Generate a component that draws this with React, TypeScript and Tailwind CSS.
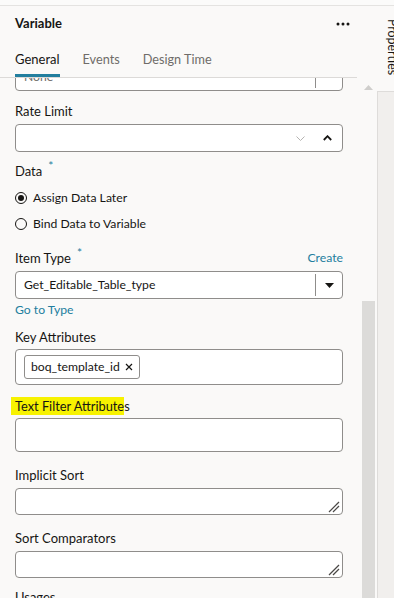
import React from "react";

const F = { fontFamily: "Lato, 'Noto Sans', sans-serif" };

function Label({ children, className = "" }: { children: React.ReactNode; className?: string }) {
  return <div className={"h-[18px] text-[13px] leading-[18px] text-[#161513] " + className}>{children}</div>;
}

function Req() {
  return <span className="inline-block h-0 align-top leading-[12px] relative -top-[2px] ml-[6px] text-[12px] text-[#227e9e]">*</span>;
}

function ResizeHandle() {
  return (
    <svg className="absolute right-[2px] bottom-[1px]" width="12" height="12" viewBox="0 0 12 12">
      <line x1="1" y1="11" x2="11" y2="1" stroke="#4a4846" strokeWidth="1.2" />
      <line x1="5" y1="11" x2="11" y2="5" stroke="#4a4846" strokeWidth="1.2" />
    </svg>
  );
}

export default function App() {
  return (
    <div style={F} className="w-[394px] h-[598px] overflow-hidden bg-[#faf9f8] flex flex-col">
      <div className="h-[5px] bg-[#fbfbfa] border-b border-[#e4e3e1] box-content" />
      <div className="flex flex-1 min-h-0">
        {/* main panel */}
        <div className="w-[377px] flex flex-col min-h-0">
          <div className="w-[357px] h-[36px] flex items-center justify-between pl-[15px] pr-[7px]">
            <span className="text-[13px] font-bold text-[#161513]">Variable</span>
            <svg width="14" height="4" viewBox="0 0 14 4">
              <circle cx="2" cy="2" r="1.5" fill="#161513" />
              <circle cx="7" cy="2" r="1.5" fill="#161513" />
              <circle cx="12" cy="2" r="1.5" fill="#161513" />
            </svg>
          </div>
          <div className="flex flex-1 min-h-0">
            <div className="w-[357px] flex flex-col min-h-0">
              <div className="flex h-[36px] border-b border-[#dcdad8] pl-[15px] gap-[23px] text-[13px]">
                <div className="h-[35px] flex items-center border-b-[3px] border-[#227e9e] pt-[3px] text-[#161513]">General</div>
                <div className="h-[35px] flex items-center text-[12.7px] text-[#6f6c69]">Events</div>
                <div className="h-[35px] flex items-center text-[12.7px] text-[#6f6c69]">Design Time</div>
              </div>
              <div className="flex-1 min-h-0 overflow-hidden pl-[15px]">
                <div className="w-[328px] flex flex-col -mt-[15px]">
                  {/* None select (scrolled) */}
                  <div className="h-[28px] flex bg-white border border-[#8f8d8b] rounded-[4px]">
                    <div className="flex-1 pl-[8px] flex items-center text-[12.2px] text-[#6f6c69]">None</div>
                    <div className="w-px bg-[#8f8d8b] my-[2px]" />
                    <div className="w-[26px]" />
                  </div>

                  <Label className="mt-[11px]">Rate Limit</Label>
                  <div className="mt-[4px] h-[28px] flex items-center justify-end bg-white border border-[#8f8d8b] rounded-[4px] pr-[10px] gap-[18px]">
                    <svg width="9" height="5" viewBox="0 0 9 5">
                      <polyline points="0.5,0.5 4.5,4.5 8.5,0.5" fill="none" stroke="#b5b3b1" strokeWidth="1" />
                    </svg>
                    <svg width="9" height="6" viewBox="0 0 9 6">
                      <polyline points="0.8,5 4.5,1.2 8.2,5" fill="none" stroke="#161513" strokeWidth="1.8" />
                    </svg>
                  </div>

                  <Label className="mt-[10px]">Data<Req /></Label>
                  <div className="mt-[9px] h-[18px] flex items-center gap-[6px] text-[12.2px] text-[#161513]">
                    <span className="w-[12px] h-[12px] rounded-full border-[1.5px] border-[#161513] flex items-center justify-center">
                      <span className="w-[6px] h-[6px] rounded-full bg-[#161513]" />
                    </span>
                    Assign Data Later
                  </div>
                  <div className="mt-[8px] h-[18px] flex items-center gap-[6px] text-[12.2px] text-[#161513]">
                    <span className="w-[12px] h-[12px] rounded-full border-[1.3px] border-[#161513]" />
                    Bind Data to Variable
                  </div>

                  <div className="mt-[16px] h-[18px] flex justify-between items-center">
                    <Label>Item Type<Req /></Label>
                    <span className="text-[12.2px] leading-[18px] text-[#227e9e]">Create</span>
                  </div>
                  <div className="mt-[4px] h-[28px] flex bg-white border border-[#8f8d8b] rounded-[4px]">
                    <div className="flex-1 pl-[8px] flex items-center text-[12.2px] text-[#161513]">Get_Editable_Table_type</div>
                    <div className="w-px bg-[#8f8d8b] my-[2px]" />
                    <div className="w-[26px] flex items-center justify-center">
                      <svg width="9" height="5" viewBox="0 0 9 5">
                        <polygon points="0,0 9,0 4.5,5" fill="#161513" />
                      </svg>
                    </div>
                  </div>
                  <div className="mt-[2px] h-[18px] text-[12.2px] leading-[18px] text-[#227e9e]">Go to Type</div>

                  <Label className="mt-[9px]">Key Attributes</Label>
                  <div className="mt-[3px] h-[36px] flex items-center bg-white border border-[#8f8d8b] rounded-[4px] pl-[8px]">
                    <div className="h-[24px] flex items-center gap-[5px] border border-[#8f8d8b] rounded-[3px] pl-[6px] pr-[6px] text-[12.2px] text-[#161513]">
                      boq_template_id
                      <svg width="8" height="8" viewBox="0 0 8 8">
                        <path d="M1 1 L7 7 M7 1 L1 7" stroke="#161513" strokeWidth="1.2" />
                      </svg>
                    </div>
                  </div>

                  <div className="mt-[12px] h-[18px] text-[12.8px] leading-[18px] text-[#161513]">
                    <span className="bg-[#f7f200] -ml-[4px] pl-[4px] py-[1px]">Text Filter Attribute</span>s
                  </div>
                  <div className="mt-[3px] h-[34px] bg-white border border-[#8f8d8b] rounded-[4px]" />

                  <Label className="mt-[14px]">Implicit Sort</Label>
                  <div className="mt-[4px] h-[27px] relative bg-white border border-[#8f8d8b] rounded-[4px]">
                    <ResizeHandle />
                  </div>

                  <Label className="mt-[14px]">Sort Comparators</Label>
                  <div className="mt-[4px] h-[27px] relative bg-white border border-[#8f8d8b] rounded-[4px]">
                    <ResizeHandle />
                  </div>

                  <Label className="mt-[10px]">Usages</Label>
                </div>
              </div>
            </div>
            {/* scrollbar */}
            <div className="w-[20px] flex flex-col items-start pl-[5px]">
              <div className="w-[13px] h-[259px] flex justify-center pt-[43px]">
                <svg width="9" height="5" viewBox="0 0 9 5">
                  <polygon points="0,5 9,5 4.5,0" fill="#cfcecc" />
                </svg>
              </div>
              <div className="w-[13px] flex-1 bg-[#dcdbd9]" />
            </div>
          </div>
        </div>
        {/* right strip */}
        <div className="w-[17px] flex flex-col">
          <div className="h-[85px] pl-[8px] pt-[13px] overflow-hidden">
            <div className="text-[12.4px] leading-[15px] text-[#161513]" style={{ writingMode: "vertical-rl" }}>Properties</div>
          </div>
          <div className="flex-1 bg-[#f1efed] border-l border-t border-[#dedcda]" />
        </div>
      </div>
    </div>
  );
}
